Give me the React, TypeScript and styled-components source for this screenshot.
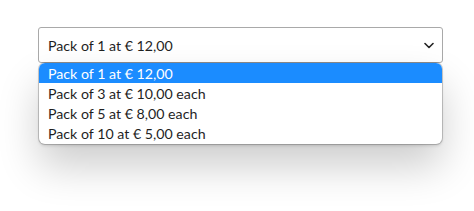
import React from "react";
import styled, { createGlobalStyle } from "styled-components";

const GlobalStyle = createGlobalStyle`
    html, body {
        margin: 0;
        padding: 0;
        background: #ffffff;
    }
    body {
        font-family: "Lato", "Noto Sans", sans-serif;
        color: #1f1f1f;
    }
`;

const Page = styled.div`
    padding: 27px 31px 0 38px;
    width: 474px;
    height: 211px;
    box-sizing: border-box;
`;

const SelectBox = styled.div`
    display: flex;
    align-items: center;
    justify-content: space-between;
    height: 36px;
    box-sizing: border-box;
    padding: 1px 8px 0 9px;
    border: 1px solid #a9a9a9;
    border-radius: 3px;
    background: #ffffff;
    font-size: 14.2px;
`;

const Chevron = styled.svg`
    width: 10px;
    height: 7px;
    flex: none;
`;

const Menu = styled.ul`
    list-style: none;
    margin: 0 1px;
    padding: 0 0 1px;
    background: #ffffff;
    border-radius: 6px;
    overflow: hidden;
    box-shadow: 0 0 0 1px rgba(0, 0, 0, 0.18), 0 2px 3px rgba(0, 0, 0, 0.12),
        0 22px 42px rgba(0, 0, 0, 0.2);
`;

const Option = styled.li<{ $active?: boolean }>`
    height: 20px;
    line-height: 21px;
    padding: 0 10px 0 9px;
    font-size: 14.2px;
    background: ${(p) => (p.$active ? "#1b8cff" : "transparent")};
    color: ${(p) => (p.$active ? "#ffffff" : "#1f1f1f")};
`;

const options = [
    "Pack of 1 at € 12,00",
    "Pack of 3 at € 10,00 each",
    "Pack of 5 at € 8,00 each",
    "Pack of 10 at € 5,00 each",
];

export default function App() {
    return (
        <Page>
            <GlobalStyle />
            <SelectBox>
                <span>{options[0]}</span>
                <Chevron viewBox="0 0 10 7">
                    <path
                        d="M1 1.5 L5 5.5 L9 1.5"
                        fill="none"
                        stroke="#222"
                        strokeWidth="1.6"
                        strokeLinecap="round"
                        strokeLinejoin="round"
                    />
                </Chevron>
            </SelectBox>
            <Menu>
                {options.map((o, i) => (
                    <Option key={o} $active={i === 0}>
                        {o}
                    </Option>
                ))}
            </Menu>
        </Page>
    );
}
